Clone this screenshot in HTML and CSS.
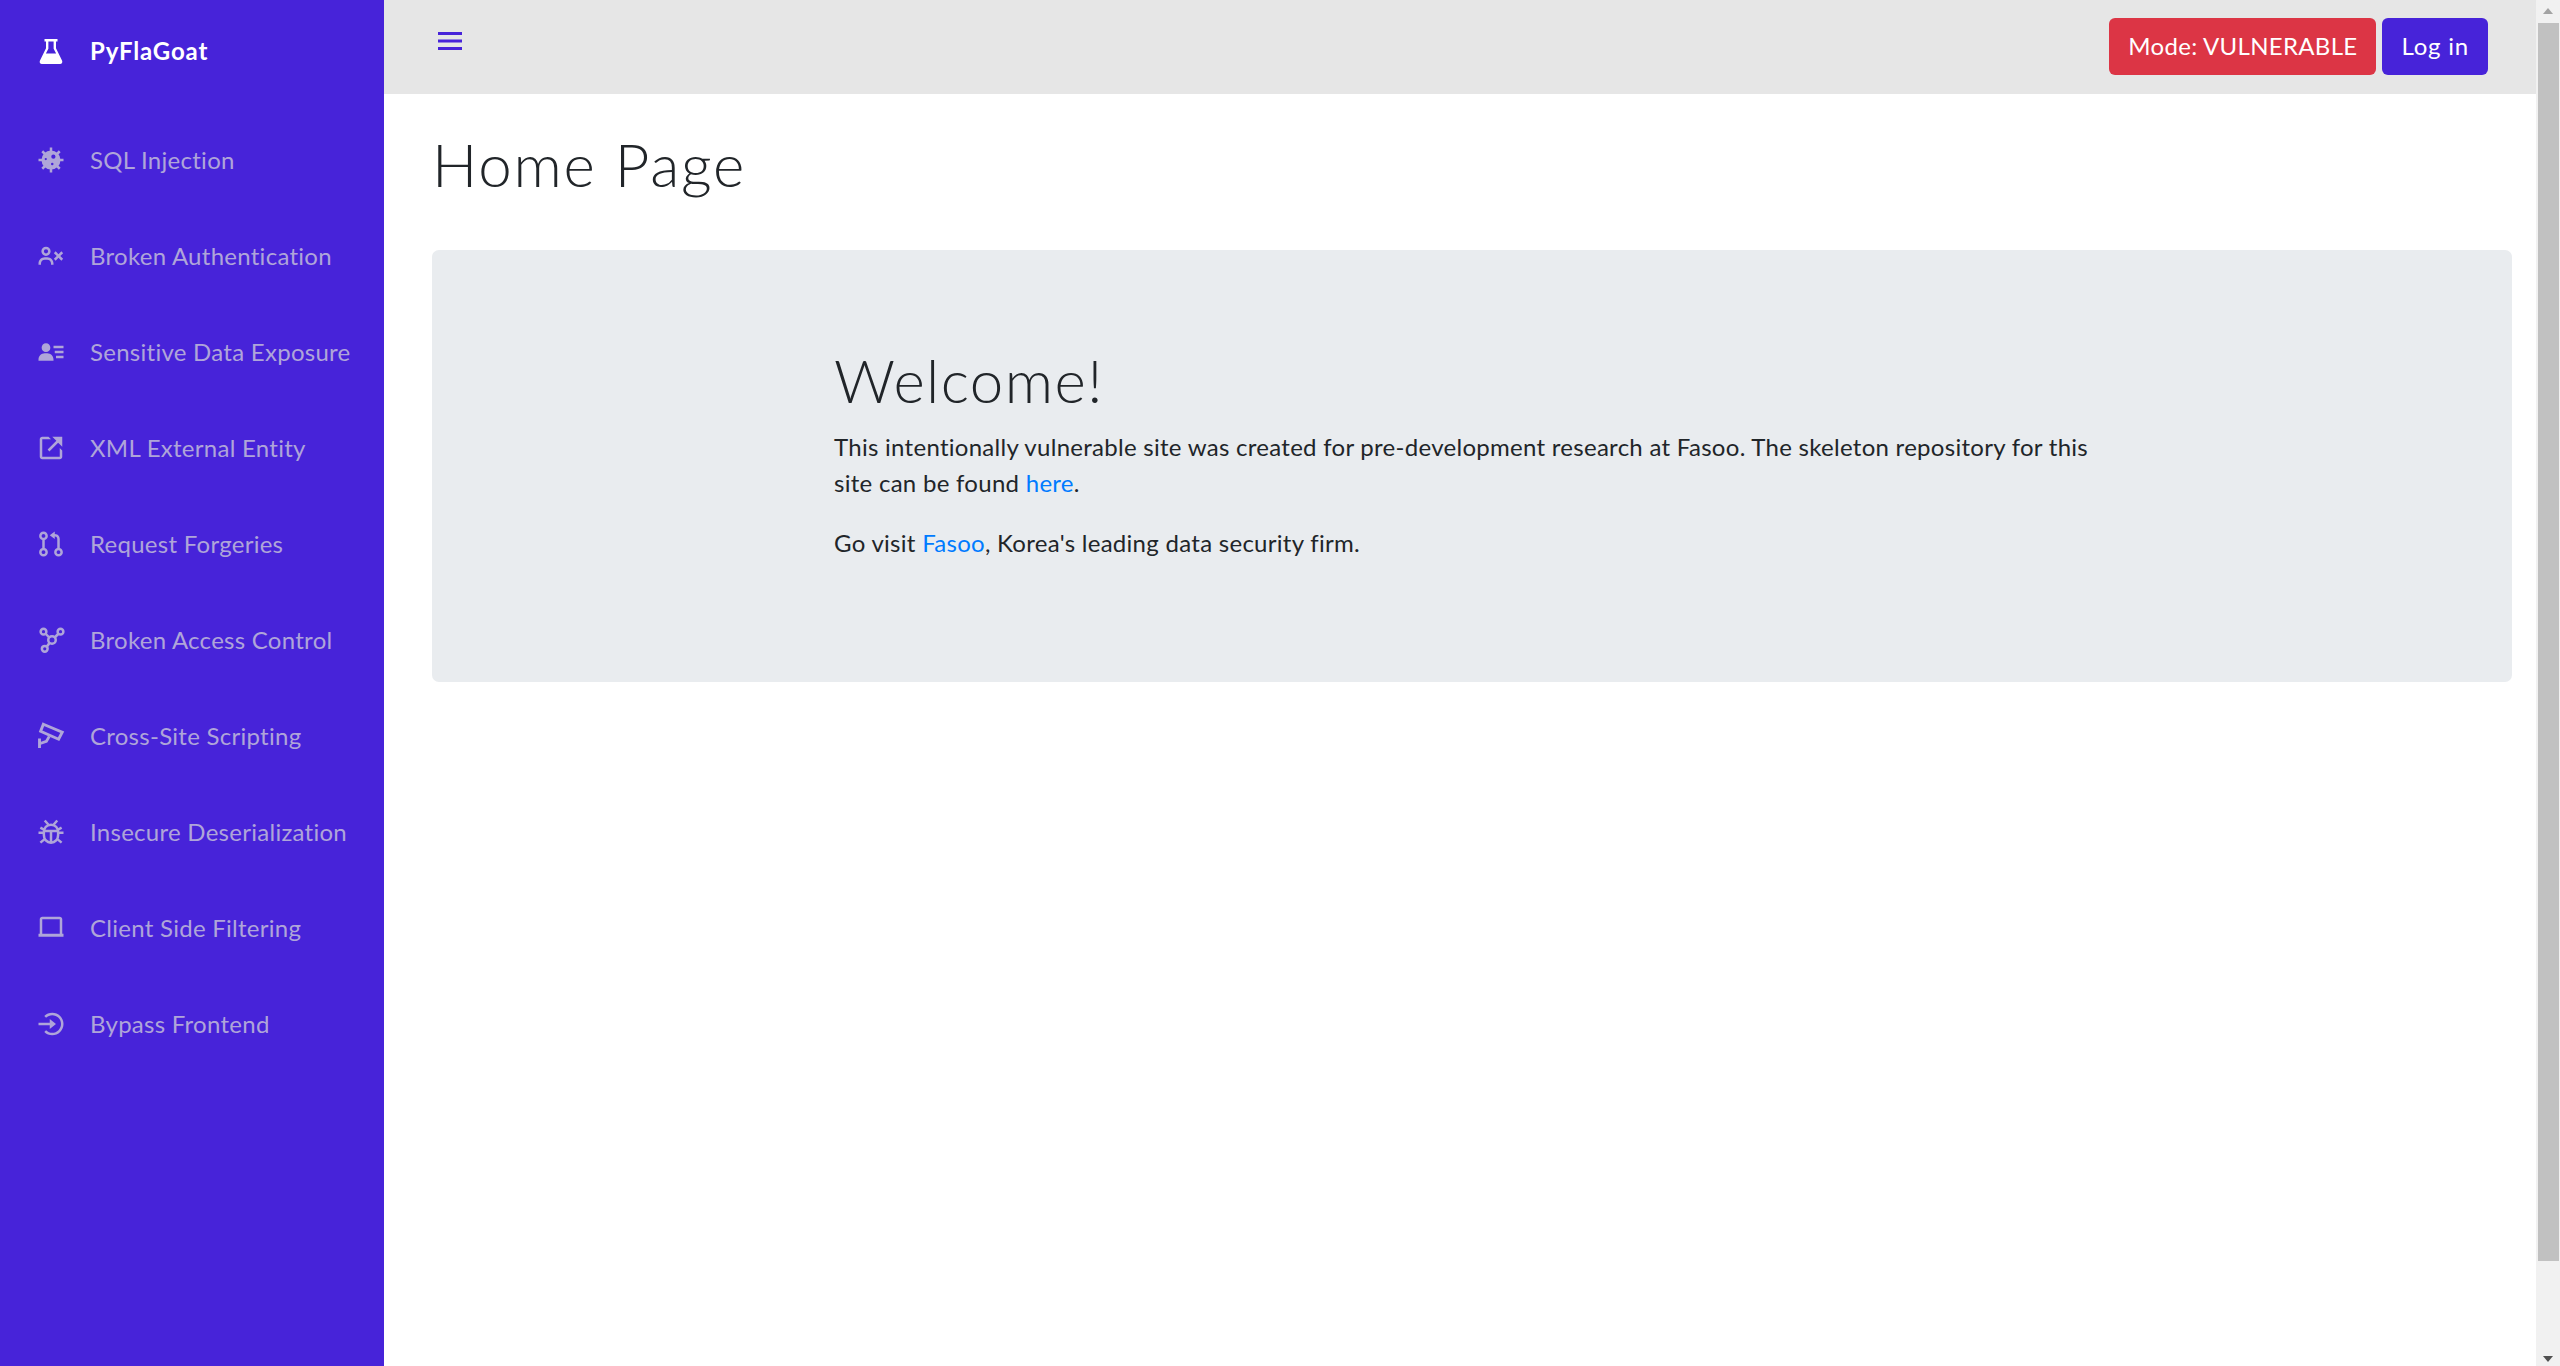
FILE: index.html
```html
<!DOCTYPE html>
<html lang="en">
<head>
<meta charset="utf-8">
<title>PyFlaGoat</title>
<link rel="stylesheet" href="styles.css">
</head>
<body>
<div class="app">
  <nav class="sidebar">
    <a class="nav-logo" href="#">
      <svg class="icon" viewBox="0 0 24 24"><path class="fill-white" d="M6.800 2.400h10.400v1.900h-1.200v5.400l4.900 10c.5 1.200-.2 2.700-1.600 2.700H4.700c-1.400 0-2.100-1.500-1.600-2.700l4.900-10V4.300H6.800zM9.900 4.300v5.800L7.900 14h8.200l-2-3.900V4.300z" fill-rule="evenodd"/></svg>
      <span class="logo-name">PyFlaGoat</span>
    </a>
    <ul class="nav-list">
      <li><a class="nav-link" href="#">
        <svg class="icon" viewBox="0 0 24 24"><path fill-rule="evenodd" d="M12 4.400a7.600 7.600 0 1 0 0 15.200 7.600 7.600 0 0 0 0-15.200zM13.900 7.600a1.700 1.700 0 1 1 0 3.400 1.700 1.700 0 0 1 0-3.400zM7.800 10.300a.9.900 0 1 1 0 1.800.9.900 0 0 1 0-1.800zM13 14.200a1 1 0 1 1 0 2 1 1 0 0 1 0-2z"/><path class="spikes" d="M12 2v4M12 18v4M2 12h4M18 12h4M5 5l2.800 2.800M16.200 16.200 19 19M5 19l2.800-2.800M16.200 7.800 19 5"/></svg>
        <span>SQL Injection</span></a></li>
      <li><a class="nav-link" href="#">
        <svg class="icon" viewBox="0 0 24 24"><circle class="ring" cx="8" cy="8.200" r="2.700"/><path d="M9 13H7c-2.757 0-5 2.243-5 5v1h2v-1c0-1.654 1.346-3 3-3h2c1.654 0 3 1.346 3 3v1h2v-1c0-2.757-2.243-5-5-5zm11.293-4.707L18 10.586l-2.293-2.293-1.414 1.414 2.292 2.292-2.292 2.293 1.414 1.414L18 13.414l2.293 2.292 1.414-1.414-2.292-2.293 2.292-2.292z"/></svg>
        <span>Broken Authentication</span></a></li>
      <li><a class="nav-link" href="#">
        <svg class="icon" viewBox="0 0 24 24"><path d="M15 11h7v2h-7zm1 4h6v2h-6zm-2-8h8v2h-8zM2 19h12v-1c0-2.757-2.243-5-5-5H7c-2.757 0-5 2.243-5 5v1zm6-7c1.995 0 3.500-1.505 3.500-3.500S9.995 5 8 5 4.500 6.505 4.500 8.500 6.005 12 8 12z"/></svg>
        <span>Sensitive Data Exposure</span></a></li>
      <li><a class="nav-link" href="#">
        <svg class="icon" viewBox="0 0 24 24"><path d="m13 3 3.293 3.293-7 7 1.414 1.414 7-7L21 11V3z"/><path d="M19 19H5V5h7l-2-2H5c-1.103 0-2 .897-2 2v14c0 1.103.897 2 2 2h14c1.103 0 2-.897 2-2v-5l-2-2v7z"/></svg>
        <span>XML External Entity</span></a></li>
      <li><a class="nav-link" href="#">
        <svg class="icon" viewBox="0 0 24 24"><path d="M19.010 15.163V7.997C19.005 6.391 17.933 4 15 4V2l-4 3 4 3V6c1.829 0 2.001 1.539 2.010 2v7.163c-1.440.434-2.500 1.757-2.500 3.337 0 1.930 1.570 3.500 3.500 3.500s3.500-1.570 3.500-3.500c0-1.580-1.060-2.903-2.500-3.337zm-1 4.837c-.827 0-1.500-.673-1.500-1.500s.673-1.500 1.500-1.500 1.500.673 1.500 1.500-.673 1.500-1.500 1.500zM9.500 5.500C9.500 3.570 7.930 2 6 2S2.500 3.570 2.500 5.500c0 1.580 1.060 2.903 2.500 3.337v6.326c-1.440.434-2.500 1.757-2.500 3.337C2.500 20.430 4.070 22 6 22s3.500-1.570 3.500-3.500c0-1.580-1.060-2.903-2.500-3.337V8.837C8.440 8.403 9.500 7.080 9.500 5.500zm-5 0C4.500 4.673 5.173 4 6 4s1.500.673 1.500 1.500S6.827 7 6 7s-1.500-.673-1.500-1.500zm3 13c0 .827-.673 1.500-1.500 1.500s-1.500-.673-1.500-1.500S5.173 17 6 17s1.500.673 1.500 1.500z"/></svg>
        <span>Request Forgeries</span></a></li>
      <li><a class="nav-link" href="#">
        <svg class="icon" viewBox="0 0 24 24"><g class="ring"><circle cx="6" cy="5.300" r="2.300"/><circle cx="19.600" cy="5.300" r="2.300"/><circle cx="7" cy="19" r="2.300"/><circle cx="12.800" cy="12" r="3"/><path d="M7.700 7l2.900 3M17.900 7l-3 3M8.600 17.300l2.300-3"/></g></svg>
        <span>Broken Access Control</span></a></li>
      <li><a class="nav-link" href="#">
        <svg class="icon" viewBox="0 0 24 24"><g class="ring thick"><path d="M5.900 2.600 21 9l-2.900 5.600L3.700 8.200z"/><path d="M2.800 14v7.500M2.800 18.200l5.500-1.900 2.300-4"/></g></svg>
        <span>Cross-Site Scripting</span></a></li>
      <li><a class="nav-link" href="#">
        <svg class="icon" viewBox="0 0 24 24"><g class="ring"><path d="M6.300 12.500c0-3.800 2.300-6.300 5.700-6.300s5.700 2.500 5.700 6.300v1.800c0 3.500-2.300 6.200-5.700 6.200s-5.700-2.700-5.700-6.200z"/><path d="M6.300 11.200h11.400M12 11.200v9M7 2.800l3 3.400M17 2.800l-3 3.400M2 12.500h4.300M17.700 12.500H22M3.500 20.500l3.700-3M20.500 20.500l-3.700-3M3.500 8.500l3.500 2M20.500 8.500l-3.500 2"/></g></svg>
        <span>Insecure Deserialization</span></a></li>
      <li><a class="nav-link" href="#">
        <svg class="icon" viewBox="0 0 24 24"><path fill-rule="evenodd" d="M21 16.500V5c0-1.100-.9-2-2-2H5c-1.100 0-2 .9-2 2v11.500H2V19h20v-2.500zM5 5h14v11.500H5z"/></svg>
        <span>Client Side Filtering</span></a></li>
      <li><a class="nav-link" href="#">
        <svg class="icon" viewBox="0 0 24 24"><path d="m10.998 16 5-4-5-4v3h-9v2h9z"/><path d="M12.999 2.999a8.938 8.938 0 0 0-6.364 2.637L8.049 7.050c1.322-1.322 3.080-2.051 4.950-2.051s3.628.729 4.950 2.051S20 10.130 20 12s-.729 3.628-2.051 4.950-3.080 2.051-4.950 2.051-3.628-.729-4.950-2.051l-1.414 1.414c1.699 1.700 3.959 2.637 6.364 2.637s4.665-.937 6.364-2.637C21.063 16.665 22 14.405 22 12s-.937-4.665-2.637-6.364a8.938 8.938 0 0 0-6.364-2.637z"/></svg>
        <span>Bypass Frontend</span></a></li>
    </ul>
  </nav>
  <div class="main">
    <header class="topbar">
      <button class="menu-toggle" type="button" aria-label="Toggle menu">
        <svg class="menu-icon" viewBox="0 0 24 24"><path d="M4 6h16v2H4zm0 5h16v2H4zm0 5h16v2H4z"/></svg>
      </button>
      <div class="actions">
        <a class="btn btn-danger" href="#">Mode: VULNERABLE</a>
        <a class="btn btn-primary" href="#">Log in</a>
      </div>
    </header>
    <main class="content">
      <h1 class="page-title">Home Page</h1>
      <section class="jumbotron">
        <div class="container">
          <h2 class="welcome">Welcome!</h2>
          <p>This intentionally vulnerable site was created for pre-development research at Fasoo. The skeleton repository for this site can be found <a href="#">here</a>.</p>
          <p>Go visit <a href="#">Fasoo</a>, Korea's leading data security firm.</p>
        </div>
      </section>
    </main>
  </div>
  <div class="scrollbar" aria-hidden="true">
    <div class="arrow arrow-up"></div>
    <div class="thumb"></div>
    <div class="track"></div>
    <div class="arrow arrow-down"></div>
  </div>
</div>
</body>
</html>
```
FILE: styles.css
```css
* { box-sizing: border-box; }
html, body { margin: 0; height: 100%; overflow: hidden; }
body {
  font-family: "Lato", "Noto Sans", sans-serif;
  font-size: 24px;
  line-height: 36px;
  color: #212529;
  background: #fff;
}
a { text-decoration: none; }
.app { display: flex; height: 1366px; }

/* Sidebar */
.sidebar { width: 384px; flex: none; background: #4723d9; color: #afa5d9; }
.nav-logo, .nav-link {
  display: flex;
  align-items: center;
  gap: 24px;
  padding-left: 36px;
  height: 96px;
}
.nav-logo { height: 102px; color: #fff; margin-bottom: 10px; }
.logo-name { font-weight: 700; letter-spacing: .85px; }
.nav-list { list-style: none; margin: 0; padding: 0; }
.nav-link { color: #afa5d9; letter-spacing: .27px; }
.icon { width: 30px; height: 30px; flex: none; fill: #afa5d9; }
.fill-white { fill: #fff; }
.ring { fill: none; stroke: #afa5d9; stroke-width: 2; }
.thick { stroke-width: 2.300; }
.spikes { fill: none; stroke: #afa5d9; stroke-width: 2; }

/* Main column */
.main { flex: 1; min-width: 0; }
.topbar {
  height: 94px;
  background: #e6e6e6;
  padding: 0 48px;
  display: flex;
  justify-content: space-between;
  align-items: flex-start;
}
.menu-toggle {
  border: 0;
  padding: 0;
  margin: 23px 0 0;
  background: none;
  width: 36px;
  height: 36px;
  display: block;
}
.menu-icon { display: block; width: 36px; height: 36px; fill: #4723d9; }
.actions { display: flex; gap: 6px; padding-top: 18px; }
.btn {
  display: block;
  height: 57px;
  padding: 10px 19px;
  border-radius: 6px;
  color: #fff;
  letter-spacing: .3px;
}
.btn-danger { background: #dc3545; }
.btn-primary { background: #4723d9; letter-spacing: .8px; }

.content { padding: 34px 24px 0 48px; color: #212529; }
.page-title {
  margin: 0 0 50px;
  font-size: 60px;
  line-height: 72px;
  font-weight: 300;
  letter-spacing: 1.800px;
}
.jumbotron {
  background: #e9ecef;
  border-radius: 7px;
  padding: 94px 0 97px;
}
.container { width: 1276px; margin: 0 auto; }
.welcome {
  margin: 0 0 13px;
  font-size: 60px;
  line-height: 72px;
  font-weight: 300;
  letter-spacing: 1.400px;
}
.container p { margin: 0 0 24px; letter-spacing: .28px; }
.container p a { color: #007bff; }

/* Window scrollbar */
.scrollbar {
  width: 24px;
  flex: none;
  background: #f1f1f1;
  display: flex;
  flex-direction: column;
  align-items: center;
  padding-left: 1px;
}
.arrow { flex: none; height: 23px; width: 100%; position: relative; }
.arrow::after {
  content: "";
  position: absolute;
  left: 6px;
  border-left: 5.500px solid transparent;
  border-right: 5.500px solid transparent;
}
.arrow-up::after { top: 8px; border-bottom: 6px solid #a3a3a3; }
.arrow-down::after { bottom: 4px; border-top: 6px solid #505050; }
.thumb { width: 21px; height: 1238px; background: #c1c1c1; flex: none; }
.track { flex: 1; }
```
